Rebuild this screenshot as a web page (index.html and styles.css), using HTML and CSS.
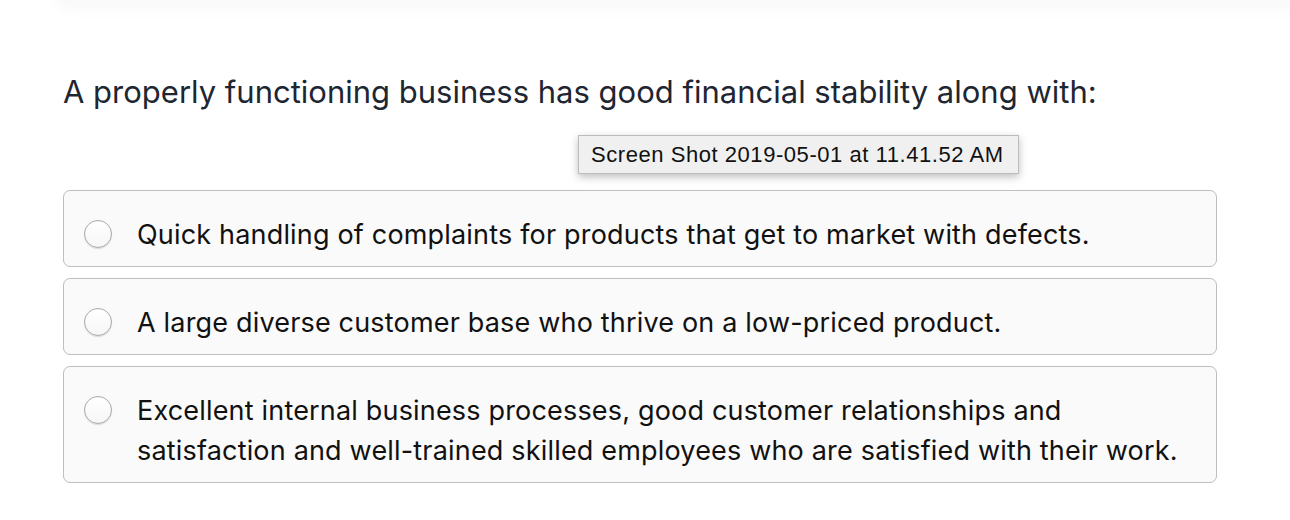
FILE: index.html
```html
<!DOCTYPE html>
<html>
<head>
<meta charset="utf-8">
<link rel="stylesheet" href="styles.css">
</head>
<body>
<div class="topbar"></div>
<main class="quiz">
  <h1 class="question">A properly functioning business has good financial stability along with:</h1>
  <div class="tip-row"><div class="tooltip">Screen Shot 2019-05-01 at 11.41.52 AM</div></div>
  <div class="options">
    <label class="option"><span class="radio"></span><span class="text">Quick handling of complaints for products that get to market with defects.</span></label>
    <label class="option"><span class="radio"></span><span class="text">A large diverse customer base who thrive on a low-priced product.</span></label>
    <label class="option"><span class="radio"></span><span class="text">Excellent internal business processes, good customer relationships and<br>satisfaction and well-trained skilled employees who are satisfied with their work.</span></label>
  </div>
</main>
</body>
</html>
```
FILE: styles.css
```css
html, body { margin: 0; padding: 0; background: #fff; }
body { width: 1290px; height: 520px; overflow: hidden; position: relative; font-family: Inter, "Open Sans", sans-serif; }
.topbar {
  position: absolute; left: 60px; right: -20px; top: -20px; height: 26px;
  background: #fafafa; box-shadow: 0 0 14px 6px #fafafa; border-radius: 10px;
}
.quiz { padding: 70px 0 0 63px; width: 1154px; }
.question {
  margin: 0; font-weight: 400; font-size: 31px; line-height: 44px; color: #1e2632;
  letter-spacing: 0;
}
.tip-row { height: 54px; position: relative; }
.tooltip {
  position: absolute; left: 515px; top: 21px;
  background: #f0f0f0; border: 1px solid #bcbcbc; box-shadow: 0 3px 8px rgba(0,0,0,0.25);
  font-family: "Liberation Sans", Arial, sans-serif; font-size: 22px; letter-spacing: 0.55px; color: #111;
  padding: 0 14px 0 12px; height: 37px; line-height: 37px; white-space: nowrap;
}
.options { display: flex; flex-direction: column; gap: 11px; margin-top: 22px; }
.option {
  display: flex; align-items: flex-start; gap: 25px;
  background: #fafafa; border: 1.5px solid #bdbdbd; border-radius: 7px;
  padding: 24px 20px 11px; color: #111;
}
.radio {
  flex: none; width: 26px; height: 26px; border-radius: 50%; margin-top: 5px;
  border: 1px solid #a9a9a9; background: linear-gradient(#ffffff, #f6f6f6);
  box-shadow: 0 1px 1px rgba(0,0,0,0.12);
}
.text { font-size: 27px; line-height: 40px; letter-spacing: 0.18px; }
```
